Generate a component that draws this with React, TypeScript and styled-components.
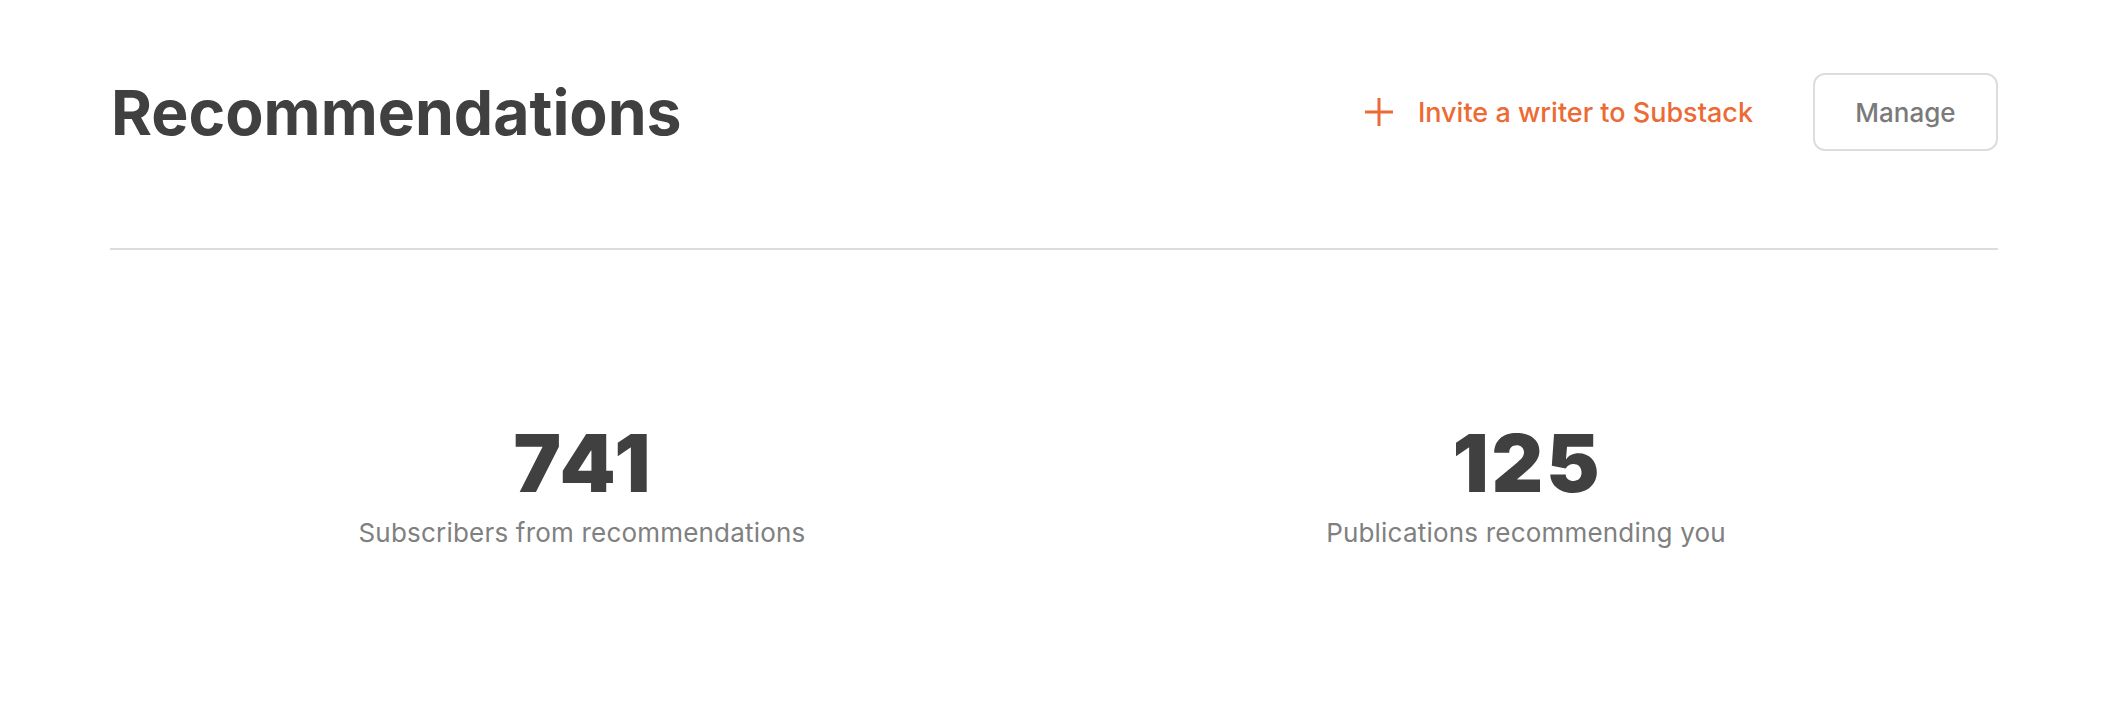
import React from "react";
import styled, { createGlobalStyle } from "styled-components";

const Global = createGlobalStyle`
  html, body { margin: 0; padding: 0; background: #ffffff; }
  body { font-family: Inter, "Noto Sans", sans-serif; -webkit-font-smoothing: antialiased; }
`;

const Page = styled.div`
  padding: 73px 110px 0 110px;
`;

const Header = styled.header`
  display: flex;
  align-items: center;
  justify-content: space-between;
  height: 78px;
`;

const Title = styled.h1`
  margin: 0 0 0 1px;
  font-size: 62.5px;
  line-height: 1;
  font-weight: 700;
  color: #404040;
`;

const Actions = styled.div`
  display: flex;
  align-items: center;
  gap: 60px;
`;

const InviteLink = styled.a`
  display: flex;
  align-items: center;
  gap: 25px;
  color: #ec6a34;
  font-size: 27px;
  font-weight: 500;
  line-height: 1;
  text-decoration: none;
  cursor: pointer;
`;

const ManageButton = styled.button`
  width: 185px;
  height: 78px;
  border: 2px solid #dddddd;
  border-radius: 12px;
  background: #ffffff;
  color: #7a7a7a;
  font-family: inherit;
  font-size: 26px;
  font-weight: 500;
  cursor: pointer;
`;

const Divider = styled.hr`
  margin: 97px 0 0 0;
  border: none;
  height: 2px;
  background: #dcdcdc;
`;

const Stats = styled.section`
  display: grid;
  grid-template-columns: 1fr 1fr;
  padding-top: 173px;
`;

const Stat = styled.div`
  display: flex;
  flex-direction: column;
  align-items: center;
`;

const Number = styled.div`
  font-size: 80px;
  line-height: 1;
  font-weight: 900;
  letter-spacing: 3px;
  padding-left: 3px;
  color: #404040;
`;

const Label = styled.div`
  margin-top: 14px;
  font-size: 26px;
  line-height: 1.25;
  letter-spacing: 0.2px;
  color: #808080;
`;

const PlusIcon = () => (
  <svg width="28" height="28" viewBox="0 0 28 28" aria-hidden="true">
    <path d="M14 0v28M0 14h28" stroke="#ec6a34" strokeWidth="3" fill="none" />
  </svg>
);

const stats = [
  { value: "741", label: "Subscribers from recommendations" },
  { value: "125", label: "Publications recommending you" },
];

export default function App() {
  return (
    <Page>
      <Global />
      <Header>
        <Title>Recommendations</Title>
        <Actions>
          <InviteLink>
            <PlusIcon />
            Invite a writer to Substack
          </InviteLink>
          <ManageButton>Manage</ManageButton>
        </Actions>
      </Header>
      <Divider />
      <Stats>
        {stats.map((s) => (
          <Stat key={s.label}>
            <Number>{s.value}</Number>
            <Label>{s.label}</Label>
          </Stat>
        ))}
      </Stats>
    </Page>
  );
}
